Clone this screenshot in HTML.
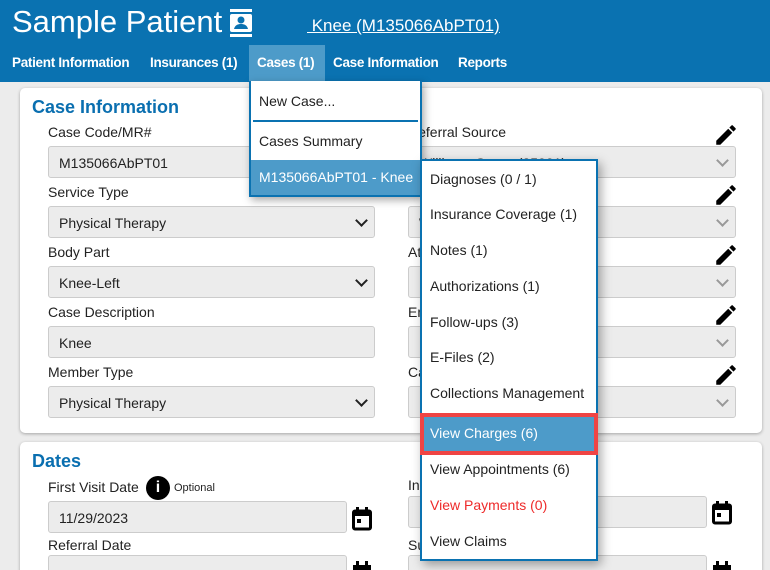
<!DOCTYPE html><html><head><style>
*{box-sizing:border-box;margin:0;padding:0}
html{width:770px;height:570px;overflow:hidden}
body{width:770px;height:570px;overflow:hidden;background:#ececec;font-family:"Liberation Sans",sans-serif;position:relative;font-size:14px;color:#222}
.a{position:absolute}
.hdr{left:0;top:0;width:770px;height:82px;background:#0a72b1}
.nav{color:#fff;font-weight:bold;font-size:13.5px;top:55px;letter-spacing:-0.3px}
.card{background:#fff;border-radius:5px;box-shadow:0 1px 3px rgba(0,0,0,.3)}
.lbl{font-size:14px;color:#222}
.inp{background:#ececec;border:1px solid #ccc;border-radius:3px;height:32px;font-size:14px;padding:8px 10px;overflow:hidden;white-space:nowrap}
.chev{position:absolute;right:8px;top:9px;width:9px;height:9px;border-right:2px solid #222;border-bottom:2px solid #222;transform:rotate(45deg)}
.chev.g{border-color:#999}
.ttl{color:#0a6fb0;font-weight:bold;font-size:18px}
.mi{font-size:14px;left:430px}
</style></head><body>
<div class="a hdr"></div>
<div class="a" style="left:12px;top:4px;color:#fff;font-size:31px">Sample Patient</div>
<svg class="a" style="left:229px;top:9px" width="24" height="28" viewBox="0 0 24 28"><rect x="1" y="0" width="22" height="3" fill="#fff"/><rect x="1" y="5" width="22" height="18" rx="2" fill="#fff"/><rect x="1" y="25" width="22" height="3" fill="#fff"/><circle cx="12" cy="11" r="3.5" fill="#0a72b1"/><path d="M5 20c1-4 4-5 7-5s6 1 7 5z" fill="#0a72b1"/></svg>
<div class="a" style="left:307px;top:16px;color:#fff;font-size:17px;text-decoration:underline">&nbsp;Knee (M135066AbPT01)</div>
<div class="a" style="left:249px;top:45px;width:76px;height:37px;background:#4d9bc9"></div>
<div class="a nav" style="left:12px">Patient Information</div>
<div class="a nav" style="left:150px">Insurances (1)</div>
<div class="a nav" style="left:257px">Cases (1)</div>
<div class="a nav" style="left:333px">Case Information</div>
<div class="a nav" style="left:458px">Reports</div>

<div class="a card" style="left:20px;top:88px;width:742px;height:345px"></div>
<div class="a ttl" style="left:32px;top:97px">Case Information</div>
<div class="a lbl" style="left:48px;top:124px">Case Code/MR#</div>
<div class="a inp" style="left:48px;top:146px;width:327px">M135066AbPT01</div>
<div class="a lbl" style="left:48px;top:184px">Service Type</div>
<div class="a inp" style="left:48px;top:206px;width:327px">Physical Therapy<span class="chev"></span></div>
<div class="a lbl" style="left:48px;top:244px">Body Part</div>
<div class="a inp" style="left:48px;top:266px;width:327px">Knee-Left<span class="chev"></span></div>
<div class="a lbl" style="left:48px;top:304px">Case Description</div>
<div class="a inp" style="left:48px;top:326px;width:327px">Knee</div>
<div class="a lbl" style="left:48px;top:364px">Member Type</div>
<div class="a inp" style="left:48px;top:386px;width:327px">Physical Therapy<span class="chev"></span></div>

<div class="a lbl" style="left:408px;top:124px">Referral Source</div>
<div class="a inp" style="left:408px;top:146px;width:328px">Williams Group (35001)<span class="chev g"></span></div>
<div class="a lbl" style="left:408px;top:244px">At</div>
<div class="a lbl" style="left:408px;top:304px">Em</div>
<div class="a lbl" style="left:408px;top:364px">Ca</div>
<div class="a inp" style="left:408px;top:206px;width:328px">W<span class="chev g"></span></div>
<div class="a inp" style="left:408px;top:266px;width:328px"><span class="chev g"></span></div>
<div class="a inp" style="left:408px;top:326px;width:328px"><span class="chev g"></span></div>
<div class="a inp" style="left:408px;top:386px;width:328px"><span class="chev g"></span></div>
<svg class="a" style="left:713px;top:122px" width="26" height="26" viewBox="0 0 24 24"><path d="M3 17.25V21h3.75L17.8 9.94l-3.75-3.75zM20.7 7.04a1 1 0 000-1.41l-2.34-2.34a1 1 0 00-1.41 0l-1.83 1.83 3.75 3.75z"/></svg>
<svg class="a" style="left:713px;top:182px" width="26" height="26" viewBox="0 0 24 24"><path d="M3 17.25V21h3.75L17.8 9.94l-3.75-3.75zM20.7 7.04a1 1 0 000-1.41l-2.34-2.34a1 1 0 00-1.41 0l-1.83 1.83 3.75 3.75z"/></svg>
<svg class="a" style="left:713px;top:242px" width="26" height="26" viewBox="0 0 24 24"><path d="M3 17.25V21h3.75L17.8 9.94l-3.75-3.75zM20.7 7.04a1 1 0 000-1.41l-2.34-2.34a1 1 0 00-1.41 0l-1.83 1.83 3.75 3.75z"/></svg>
<svg class="a" style="left:713px;top:302px" width="26" height="26" viewBox="0 0 24 24"><path d="M3 17.25V21h3.75L17.8 9.94l-3.75-3.75zM20.7 7.04a1 1 0 000-1.41l-2.34-2.34a1 1 0 00-1.41 0l-1.83 1.83 3.75 3.75z"/></svg>
<svg class="a" style="left:713px;top:362px" width="26" height="26" viewBox="0 0 24 24"><path d="M3 17.25V21h3.75L17.8 9.94l-3.75-3.75zM20.7 7.04a1 1 0 000-1.41l-2.34-2.34a1 1 0 00-1.41 0l-1.83 1.83 3.75 3.75z"/></svg>

<div class="a card" style="left:20px;top:442px;width:742px;height:140px"></div>
<div class="a ttl" style="left:32px;top:451px">Dates</div>
<div class="a lbl" style="left:48px;top:479px">First Visit Date</div>
<div class="a" style="left:146px;top:476px;width:24px;height:24px;border-radius:50%;background:#000;color:#fff;font-weight:bold;text-align:center;line-height:24px;font-size:16px">i</div>
<div class="a" style="left:174px;top:482px;font-size:11px">Optional</div>
<div class="a inp" style="left:48px;top:501px;width:299px">11/29/2023</div>
<div class="a lbl" style="left:48px;top:537px">Referral Date</div>
<div class="a inp" style="left:48px;top:555px;width:299px"></div>
<div class="a lbl" style="left:408px;top:477px">In</div>
<div class="a lbl" style="left:408px;top:537px">Su</div>
<div class="a inp" style="left:408px;top:496px;width:299px"></div>
<div class="a inp" style="left:408px;top:555px;width:299px"></div>
<svg class="a" style="left:352px;top:507px" width="20" height="24" viewBox="0 0 20 24"><rect x="4" y="0" width="3" height="4"/><rect x="13" y="0" width="3" height="4"/><rect x="1.5" y="4" width="17" height="18" rx="1.5" fill="none" stroke="#000" stroke-width="3"/><rect x="1" y="4" width="18" height="5"/><rect x="5" y="12" width="4" height="4"/></svg>
<svg class="a" style="left:712px;top:501px" width="20" height="24" viewBox="0 0 20 24"><rect x="4" y="0" width="3" height="4"/><rect x="13" y="0" width="3" height="4"/><rect x="1.5" y="4" width="17" height="18" rx="1.5" fill="none" stroke="#000" stroke-width="3"/><rect x="1" y="4" width="18" height="5"/><rect x="5" y="12" width="4" height="4"/></svg>
<svg class="a" style="left:352px;top:561px" width="20" height="24" viewBox="0 0 20 24"><rect x="4" y="0" width="3" height="4"/><rect x="13" y="0" width="3" height="4"/><rect x="1" y="4" width="18" height="5"/></svg>
<svg class="a" style="left:712px;top:561px" width="20" height="24" viewBox="0 0 20 24"><rect x="4" y="0" width="3" height="4"/><rect x="13" y="0" width="3" height="4"/><rect x="1" y="4" width="18" height="5"/></svg>

<div class="a" style="left:249px;top:81px;width:173px;height:116px;background:#fff;border:2px solid #0a72b1;border-top:none;box-shadow:2px 3px 8px rgba(0,0,0,.35)"></div>
<div class="a" style="left:259px;top:93px">New Case...</div>
<div class="a" style="left:253px;top:120px;width:165px;height:2px;background:#0a72b1"></div>
<div class="a" style="left:259px;top:133px">Cases Summary</div>
<div class="a" style="left:251px;top:160px;width:169px;height:35px;background:#4d9bc9"></div>
<div class="a" style="left:259px;top:169px;color:#fff">M135066AbPT01 - Knee</div>

<div class="a" style="left:420px;top:159px;width:178px;height:402px;background:#fff;border:2px solid #0a72b1;box-shadow:3px 4px 10px rgba(0,0,0,.35)"></div>
<div class="a mi" style="top:171px">Diagnoses (0 / 1)</div>
<div class="a mi" style="top:206px">Insurance Coverage (1)</div>
<div class="a mi" style="top:242px">Notes (1)</div>
<div class="a mi" style="top:278px">Authorizations (1)</div>
<div class="a mi" style="top:314px">Follow-ups (3)</div>
<div class="a mi" style="top:349px">E-Files (2)</div>
<div class="a mi" style="top:385px">Collections Management</div>
<div class="a" style="left:420px;top:413px;width:178px;height:42px;background:#4d9bc9;border:4px solid #ef4444"></div>
<div class="a mi" style="top:425px;color:#fff">View Charges (6)</div>
<div class="a mi" style="top:461px">View Appointments (6)</div>
<div class="a mi" style="top:497px;color:#ee2a2a">View Payments (0)</div>
<div class="a mi" style="top:533px">View Claims</div>
</body></html>
